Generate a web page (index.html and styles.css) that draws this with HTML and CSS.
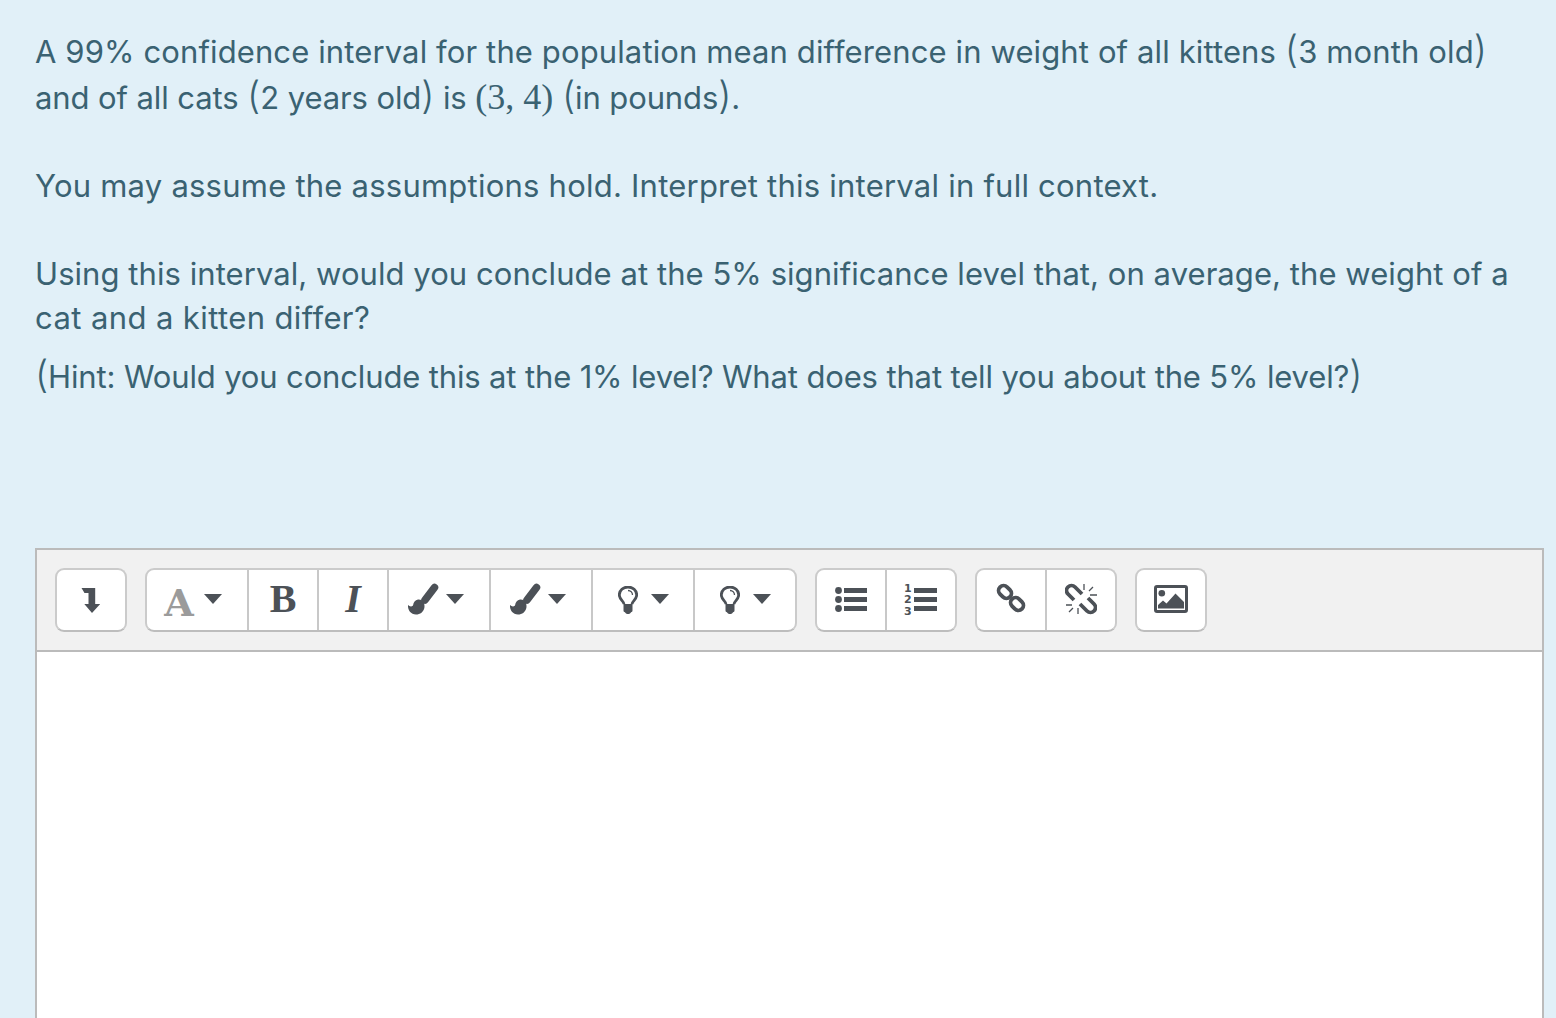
FILE: index.html
```html
<!DOCTYPE html>
<html lang="en">
<head>
<meta charset="utf-8">
<title>Question</title>
<link rel="stylesheet" href="styles.css">
</head>
<body>
<main class="question">
  <div class="prompt">
    <p class="para"><span class="row t1">A 99% confidence interval for the population mean difference in weight of all kittens <span class="paren">(</span>3 month old<span class="paren">)</span></span><span class="row t2">and of all cats <span class="paren">(</span>2 years old<span class="paren">)</span> is <span class="math">(3, 4)</span> <span class="paren">(</span>in pounds<span class="paren">)</span>.</span></p>
    <p class="para gap t3">You may assume the assumptions hold. Interpret this interval in full context.</p>
    <p class="para gap"><span class="row t4">Using this interval, would you conclude at the 5% significance level that, on average, the weight of a</span><span class="row t4b">cat and a kitten differ?</span></p>
    <p class="para hint t5"><span class="paren">(</span>Hint: Would you conclude this at the 1% level? What does that tell you about the 5% level?<span class="paren">)</span></p>
  </div>
  <section class="editor">
    <div class="toolbar">
      <div class="group">
        <button class="btn"><svg width="20" height="26" viewBox="0 0 20 26"><path class="ink" d="M.5 1H14.200V17H19.200L11 26 3.300 17H7.500V6H3.500Z"/></svg></button>
      </div>
      <div class="group">
        <button class="btn drop first"><span class="glyph-a">A</span><i class="caret"></i></button>
        <button class="btn"><span class="glyph-b">B</span></button>
        <button class="btn"><span class="glyph-i">I</span></button>
        <button class="btn drop"><svg width="32" height="34" viewBox="0 0 32 34"><path class="handle" d="M27.500 4.500 18 17"/><path class="ink" d="M11 16.500c4-.5 7 3 6.500 7.500-.6 5-4.500 7.500-8.500 7.500-5 0-8.500-4.500-8-9.500 1.500 1.500 3.500 2 5 .5.500-3 2-5.500 5-6Z"/></svg><i class="caret"></i></button>
        <button class="btn drop"><svg width="32" height="34" viewBox="0 0 32 34"><path class="handle" d="M27.500 4.500 18 17"/><path class="ink" d="M11 16.500c4-.5 7 3 6.500 7.500-.6 5-4.500 7.500-8.500 7.500-5 0-8.500-4.500-8-9.500 1.500 1.500 3.500 2 5 .5.500-3 2-5.500 5-6Z"/></svg><i class="caret"></i></button>
        <button class="btn drop bulb"><svg width="20" height="28" viewBox="0 0 20 28"><path class="line" d="M6 18.200c0-3-4.700-4.600-4.700-9.200a8.700 8 0 0 1 17.400 0c0 4.600-4.700 6.200-4.700 9.200"/><path class="spark" d="M10 4.500a4.500 4.500 0 0 1 4.500 4.500"/><path class="ink" d="M5.500 18h9v6.500c0 1-.7 1.500-1.500 1.700-.5 1.100-1.500 1.800-3 1.800s-2.500-.7-3-1.800c-.8-.2-1.500-.7-1.500-1.700Z"/></svg><i class="caret"></i></button>
        <button class="btn drop bulb"><svg width="20" height="28" viewBox="0 0 20 28"><path class="line" d="M6 18.200c0-3-4.700-4.600-4.700-9.200a8.700 8 0 0 1 17.400 0c0 4.600-4.700 6.200-4.700 9.200"/><path class="spark" d="M10 4.500a4.500 4.500 0 0 1 4.500 4.500"/><path class="ink" d="M5.500 18h9v6.500c0 1-.7 1.500-1.500 1.700-.5 1.100-1.500 1.800-3 1.800s-2.500-.7-3-1.800c-.8-.2-1.500-.7-1.500-1.700Z"/></svg><i class="caret"></i></button>
      </div>
      <div class="group">
        <button class="btn"><svg class="lift" width="34" height="26" viewBox="0 0 34 26"><g class="ink"><circle cx="4.500" cy="4.500" r="3.400"/><circle cx="4.500" cy="13.500" r="3.400"/><circle cx="4.500" cy="22.500" r="3.400"/><rect x="10" y="2" width="23" height="5"/><rect x="10" y="11" width="23" height="5"/><rect x="10" y="20" width="23" height="5"/></g></svg></button>
        <button class="btn"><svg class="lift" width="34" height="33" viewBox="0 0 34 33"><g class="ink"><text class="nums" x="0" y="8.500">1</text><text class="nums" x="0" y="20">2</text><text class="nums" x="0" y="31.500">3</text><rect x="10" y="5" width="23" height="5"/><rect x="10" y="14" width="23" height="5"/><rect x="10" y="23" width="23" height="5"/></g></svg></button>
      </div>
      <div class="group">
        <button class="btn"><svg class="lift" width="32" height="32" viewBox="0 0 32 32"><rect class="chain" x="3" y="4" width="14" height="10" rx="5" transform="rotate(45 10 9)"/><rect class="chain" x="15" y="16" width="14" height="10" rx="5" transform="rotate(45 22 21)"/></svg></button>
        <button class="btn"><svg class="lift" width="32" height="32" viewBox="0 0 32 32"><path class="chain" d="M17 11 10 4a5 5 0 0 0-7 0 5 5 0 0 0 0 7l6 6"/><path class="chain" d="M15 21l7 7a5 5 0 0 0 7 0 5 5 0 0 0 0-7l-6-6"/><path class="spark" d="M19 1v6M24 8l4-4M25 12h7M1 22h6M4 29l4-4M13 25v6"/></svg></button>
      </div>
      <div class="group">
        <button class="btn"><svg class="lift" width="34" height="28" viewBox="0 0 34 28"><rect class="frame" x="1.500" y="1.500" width="31" height="25" rx="1.500"/><circle class="ink" cx="7.800" cy="8.200" r="3.300"/><path class="ink" d="M4 23.500V20l5-4.500 3.500 3 9-10L30 17v6.500Z"/></svg></button>
      </div>
    </div>
    <div class="content"></div>
  </section>
</main>
</body>
</html>
```
FILE: styles.css
```css
* { box-sizing: border-box; }
html, body { margin: 0; height: 100%; overflow: hidden; }
body { background: #e1f0f8; color: #3a6272; font-family: Inter, "Noto Sans", sans-serif; }
.question { padding: 30px 12px 0 35px; }
.prompt { height: 518px; }
.para { margin: 0; font-size: 31px; line-height: 44px; white-space: nowrap; font-weight: 400; }
.row { display: block; }
.t1 { letter-spacing: 0.12px; }
.t2 { letter-spacing: -0.1px; margin-top: 2px; }
.t3 { letter-spacing: 0.23px; }
.t4 { letter-spacing: 0.06px; }
.t4b { letter-spacing: 0.4px; }
.t5 { letter-spacing: -0.14px; }
.gap { margin-top: 44px; }
.hint { margin-top: 15px; }
.paren { font-size: 38px; font-weight: 300; line-height: 0; }
.math { font-family: "Liberation Serif", serif; font-size: 36px; letter-spacing: 0; line-height: 0; }
.editor { border: 2px solid #bbb; border-bottom: 0; background: #fff; height: 470px; }
.toolbar { display: flex; gap: 18px; padding: 18px 18px; background: #f1f1f1; border-bottom: 2px solid #bbb; height: 102px; }
.group { display: flex; height: 64px; background: #fff; border: 2px solid #cbcbcb; border-bottom-color: #bdbdbd; border-radius: 9px; overflow: hidden; }
.btn { display: flex; align-items: center; justify-content: center; width: 70px; padding: 0; background: none; border: 0; border-right: 2px solid #c8c8c8; color: #4c5157; }
.btn:last-child { width: 68px; border-right: 0; }
.drop { width: 102px; gap: 7px; padding-right: 8px; }
.drop:last-child { width: 100px; }
.first { gap: 10px; }
.bulb { gap: 13px; padding-right: 0; }
.caret { width: 0; height: 0; border: 9.500px solid transparent; border-top: 10.500px solid #4c5157; border-bottom: 0; margin-top: -2px; }
.glyph-a { font: 700 38px/1 "DejaVu Serif", serif; color: #9b9b9b; margin-top: 6px; }
.glyph-b { font: 700 40px/1 "Liberation Serif", serif; margin-top: -2px; }
.glyph-i { font: italic 700 40px/1 "Liberation Serif", serif; margin-top: -2px; }
svg { display: block; }
.lift { margin-top: -2px; }
.ink { fill: #4c5157; }
.handle { fill: none; stroke: #4c5157; stroke-width: 7.500; stroke-linecap: round; }
.line { fill: none; stroke: #4c5157; stroke-width: 2.800; }
.chain { fill: none; stroke: #4c5157; stroke-width: 3.800; }
.spark { fill: none; stroke: #4c5157; stroke-width: 1.300; }
.frame { fill: #fff; stroke: #4c5157; stroke-width: 3; }
.nums { font: 700 11px "DejaVu Sans", sans-serif; }
.content { height: 366px; background: #fff; }
```
